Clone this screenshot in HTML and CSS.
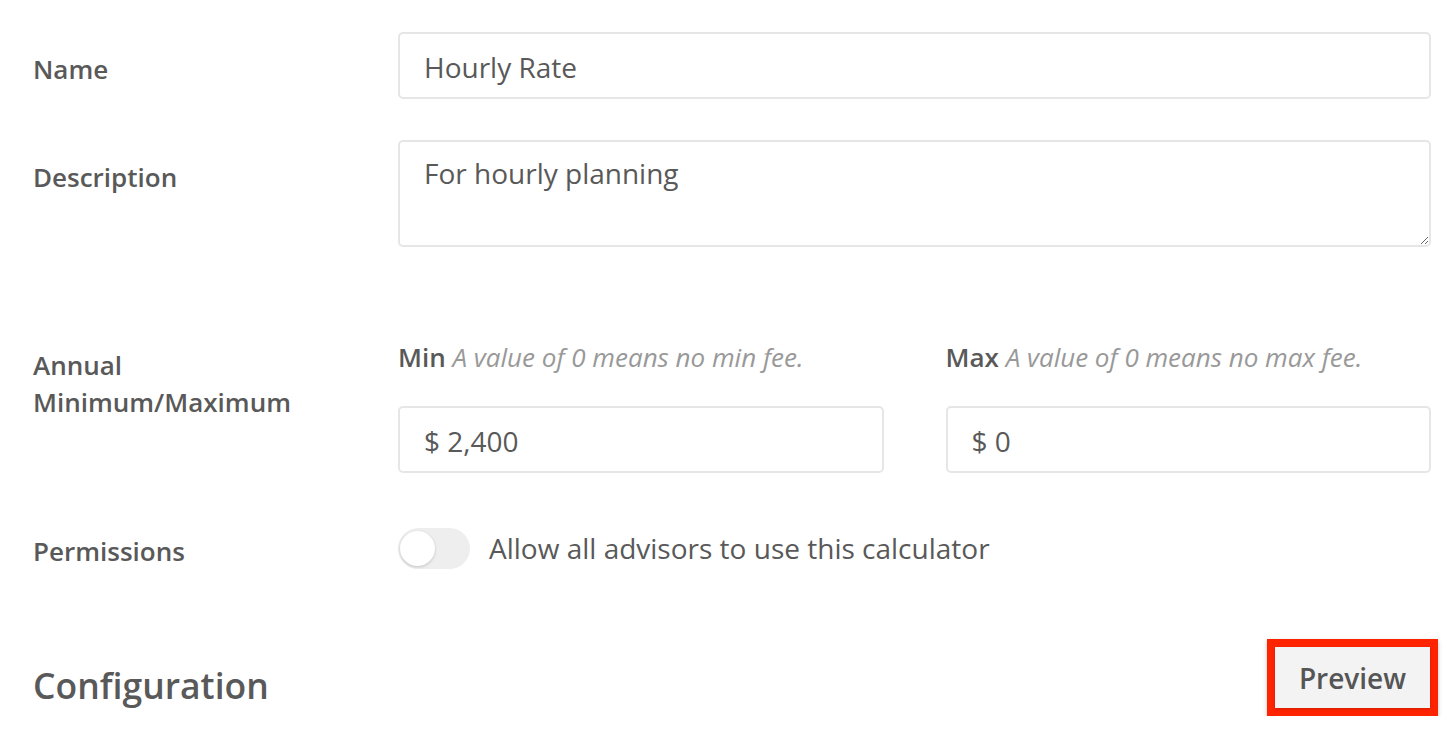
FILE: index.html
```html
<!DOCTYPE html>
<html lang="en">
<head>
<meta charset="utf-8">
<title>Calculator settings</title>
<link rel="stylesheet" href="styles.css">
</head>
<body>
<div class="page">
  <div class="row row-name">
    <div class="label">Name</div>
    <div class="field"><input class="text-input" type="text" value="Hourly Rate"></div>
  </div>
  <div class="row row-desc">
    <div class="label">Description</div>
    <div class="field"><textarea class="text-area">For hourly planning</textarea></div>
  </div>
  <div class="row row-minmax">
    <div class="label">Annual<br>Minimum/Maximum</div>
    <div class="field minmax">
      <div class="mm-col">
        <div class="mm-label"><b>Min</b> <i>A value of 0 means no min fee.</i></div>
        <input class="text-input" type="text" value="$ 2,400">
      </div>
      <div class="mm-col">
        <div class="mm-label"><b>Max</b> <i>A value of 0 means no max fee.</i></div>
        <input class="text-input" type="text" value="$ 0">
      </div>
    </div>
  </div>
  <div class="row row-perm">
    <div class="label">Permissions</div>
    <div class="field toggle-field">
      <span class="toggle"><span class="knob"></span></span>
      <span class="toggle-text">Allow all advisors to use this calculator</span>
    </div>
  </div>
  <div class="config-row">
    <h2 class="config-title">Configuration</h2>
    <div class="highlight"><button class="preview-btn" type="button">Preview</button></div>
  </div>
</div>
</body>
</html>
```
FILE: styles.css
```css
* { box-sizing: border-box; }
html, body { margin: 0; padding: 0; background: #fff; }
body {
  font-family: "Open Sans", "Noto Sans", sans-serif;
  color: #595959;
}
.page {
  padding: 32px 25px 0 33px;
}
.row {
  display: grid;
  grid-template-columns: 365px 1fr;
}
.label {
  font-size: 26px;
  font-weight: 600;
  line-height: 37px;
}
.row-name .label { padding-top: 19px; }
.row-desc { margin-top: 41px; }
.row-desc .label { padding-top: 19px; }
.row-minmax { margin-top: 91px; }
.row-minmax .label { padding-top: 9px; }
.row-perm { margin-top: 53px; }
.row-perm .label { padding-top: 7px; }

.text-input, .text-area {
  display: block;
  width: 100%;
  font-family: "Open Sans", "Noto Sans", sans-serif;
  font-size: 28px;
  color: #595959;
  background: #fff;
  border: 2px solid #e6e6e6;
  border-radius: 5px;
  padding: 0 24px;
  outline: none;
}
.text-input { height: 67px; padding-top: 3px; }
.text-area {
  height: 107px;
  padding-top: 12px;
  resize: vertical;
  line-height: 38px;
}
.minmax {
  display: grid;
  grid-template-columns: 1fr 1fr;
  column-gap: 62px;
}
.mm-label {
  font-size: 26px;
  line-height: 36px;
  margin-top: 1px;
  margin-bottom: 31px;
  white-space: nowrap;
}
.mm-label b { font-weight: 600; }
.mm-label i { color: #999; font-weight: 400; }

.toggle-field {
  display: flex;
  align-items: center;
  gap: 19px;
}
.toggle {
  position: relative;
  width: 72px;
  height: 41px;
  border-radius: 21px;
  background: #eeeeee;
  flex: none;
}
.knob {
  position: absolute;
  left: 2px;
  top: 3px;
  width: 35px;
  height: 35px;
  border-radius: 50%;
  background: #fff;
  box-shadow: 0 1px 3px rgba(0,0,0,0.18);
}
.toggle-text {
  font-size: 28px;
}
.config-row {
  display: flex;
  justify-content: space-between;
  align-items: center;
  margin-top: 69px;
}
.config-title {
  margin: 0;
  font-size: 35.5px;
  font-weight: 600;
  line-height: 50px;
  padding-top: 14px;
}
.highlight {
  border: 8px solid #ff2400;
  box-shadow: 0 2px 4px rgba(0,0,0,0.25);
  margin-right: -7px;
}
.preview-btn {
  display: block;
  width: 155px;
  height: 61px;
  border: 0;
  background: #f3f3f3;
  font-family: "Open Sans", "Noto Sans", sans-serif;
  font-size: 28px;
  font-weight: 600;
  color: #555;
  box-shadow: 0 1px 3px rgba(0,0,0,0.2);
}
```
